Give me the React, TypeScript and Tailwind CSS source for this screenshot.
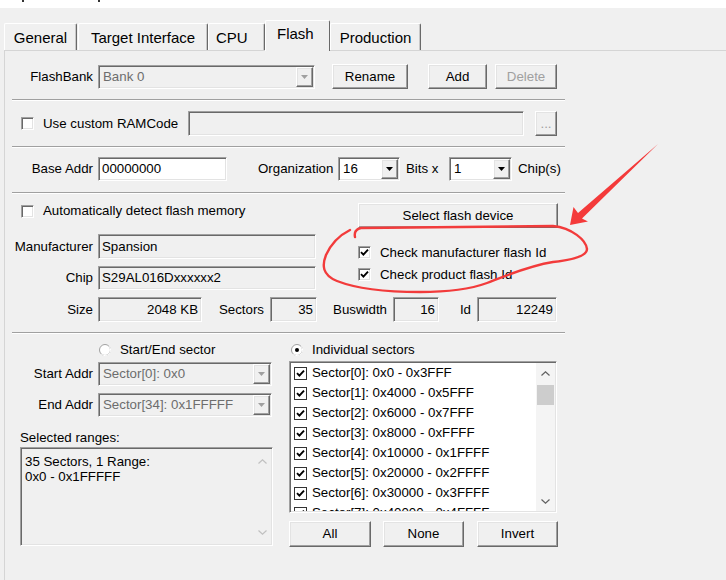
import React from "react";

const sunken =
  "border border-t-[#a0a0a0] border-l-[#a0a0a0] border-r-white border-b-white shadow-[inset_1px_1px_0_#696969,inset_-1px_-1px_0_#e3e3e3]";
const raised =
  "border border-t-white border-l-white border-r-[#696969] border-b-[#696969] shadow-[inset_-1px_-1px_0_#a0a0a0,inset_1px_1px_0_#e3e3e3]";

type Kids = { children?: React.ReactNode };

function Arrow({ disabled }: { disabled?: boolean }) {
  return (
    <div className={`${raised} w-[17px] h-full flex items-center justify-center bg-[#f0f0f0] shrink-0`}>
      <svg width="7" height="4" viewBox="0 0 7 4">
        <path d="M0 0h7L3.5 4z" fill={disabled ? "#a0a0a0" : "#000"} />
      </svg>
    </div>
  );
}

function Combo({ value, disabled, w }: { value: string; disabled?: boolean; w: string }) {
  return (
    <div
      className={`${sunken} ${w} h-[24px] p-[1px] flex items-stretch shrink-0 ${
        disabled ? "bg-[#f0f0f0] text-[#6d6d6d]" : "bg-white text-black"
      }`}
    >
      <div className="flex-1 flex items-center pl-[3px] overflow-hidden whitespace-nowrap">{value}</div>
      <Arrow disabled={disabled} />
    </div>
  );
}

function Field({ w, h = "h-[24px]", white, right, children }: Kids & { w: string; h?: string; white?: boolean; right?: boolean }) {
  return (
    <div
      className={`${sunken} ${w} ${h} shrink-0 flex items-center px-[3px] whitespace-nowrap ${
        white ? "bg-white" : "bg-[#f0f0f0]"
      } ${right ? "justify-end" : "justify-start"}`}
    >
      {children}
    </div>
  );
}

function Button({ w, h = "h-[25px]", disabled, children, className = "" }: Kids & { w: string; h?: string; disabled?: boolean; className?: string }) {
  return (
    <div
      className={`${raised} ${w} ${h} ${className} shrink-0 bg-[#f0f0f0] flex items-center justify-center ${
        disabled ? "text-[#a0a0a0]" : "text-black"
      }`}
    >
      {children}
    </div>
  );
}

function Check({ checked, flat }: { checked?: boolean; flat?: boolean }) {
  return (
    <div
      className={`${
        flat ? "border border-[#333]" : sunken
      } w-[13px] h-[13px] bg-white flex items-center justify-center shrink-0`}
    >
      {checked && (
        <svg width="9" height="9" viewBox="0 0 9 9">
          <path d="M1 4.2l2.4 2.4L8 1.6" stroke="#000" strokeWidth="1.9" fill="none" />
        </svg>
      )}
    </div>
  );
}

function Radio({ checked }: { checked?: boolean }) {
  return (
    <svg width="12" height="12" viewBox="0 0 12 12" className="shrink-0">
      <circle cx="6" cy="6" r="5.5" fill="#fff" stroke="#a0a0a0" />
      <path d="M10 2.2A5.5 5.5 0 0 1 2.2 10" stroke="#fff" fill="none" />
      {checked && <circle cx="6" cy="6" r="2" fill="#000" />}
    </svg>
  );
}

function Separator() {
  return <div className="ml-[7px] w-[553px] h-[2px] border-t border-t-[#a0a0a0] border-b border-b-white" />;
}

function Label({ w = "w-[88px]", children, className = "" }: Kids & { w?: string; className?: string }) {
  return <div className={`${w} ${className} shrink-0 text-right whitespace-nowrap`}>{children}</div>;
}

function Chevron({ up, color }: { up?: boolean; color: string }) {
  return (
    <svg width="9" height="5" viewBox="0 0 9 5">
      <path d={up ? "M0.5 4.5L4.5 0.8L8.5 4.5" : "M0.5 0.5L4.5 4.2L8.5 0.5"} stroke={color} strokeWidth="1.2" fill="none" />
    </svg>
  );
}

const sectors = [
  "Sector[0]: 0x0 - 0x3FFF",
  "Sector[1]: 0x4000 - 0x5FFF",
  "Sector[2]: 0x6000 - 0x7FFF",
  "Sector[3]: 0x8000 - 0xFFFF",
  "Sector[4]: 0x10000 - 0x1FFFF",
  "Sector[5]: 0x20000 - 0x2FFFF",
  "Sector[6]: 0x30000 - 0x3FFFF",
  "Sector[7]: 0x40000 - 0x4FFFF",
];

function Tab({ w, active, className = "justify-center", children }: Kids & { w: string; active?: boolean; className?: string }) {
  if (active) {
    return (
      <div
        className={`${w} ${className} h-[31px] -mb-px relative z-10 bg-[#f0f0f0] border-t border-l border-t-white border-l-white border-r border-r-[#696969] rounded-t-[2px] flex items-start pt-[4px] shrink-0`}
      >
        {children}
      </div>
    );
  }
  return (
    <div
      className={`${w} ${className} h-[27px] bg-[#f0f0f0] border-t border-l border-t-white border-l-white border-r border-r-[#696969] shadow-[inset_-1px_0_0_#c8c8c8] rounded-t-[2px] flex items-center pt-[1px] shrink-0`}
    >
      {children}
    </div>
  );
}

function Annotation() {
  return (
    <svg width="726" height="580" viewBox="0 0 726 580" className="absolute inset-0 pointer-events-none">
      <path
        d="M355 237C354 232 356 229 361 228L553 226C572 228 586 240 587 249C587 256 572 260 553 262C528 266 505 276 487 283C468 290 445 292 420 292C392 292 360 290 337 281C322 275 322 265 326 255C331 244 340 235 350 230"
        stroke="#f23b3b"
        strokeWidth="2.4"
        fill="none"
        strokeLinecap="round"
      />
      <polygon points="570,225 573.5,207 578,213 658,144 582,218.5 588,221.5" fill="#f43a3a" />
    </svg>
  );
}

export default function App() {
  return (
    <div className="w-[726px] h-[580px] bg-[#f0f0f0] relative overflow-hidden font-['Liberation_Sans',Arial,sans-serif] text-[13.3px] leading-[16px] text-black">
      <div className="h-[8px] bg-white flex items-start">
        <div className="ml-[22px] w-[2px] h-[2px] bg-[#333]" />
        <div className="ml-[74px] w-[2px] h-[2px] bg-[#333]" />
      </div>

      <div className="h-[42px] flex items-end pl-[4px] text-[15px] leading-[18px] relative z-10">
        <Tab w="w-[73px]">General</Tab>
        <Tab w="w-[130px] ml-[1px]">Target Interface</Tab>
        <Tab w="w-[57px]" className="justify-start pl-[7px]">CPU</Tab>
        <Tab w="w-[65px]" active className="justify-start pl-[11px]">Flash</Tab>
        <Tab w="w-[91px]">Production</Tab>
      </div>

      <div className="ml-[4px] h-[530px] border-t border-l border-t-[#d5d5d5] border-l-[#d5d5d5]">
        {/* FlashBank */}
        <div className="mt-[13px] h-[25px] flex items-center">
          <Label>FlashBank</Label>
          <div className="ml-[5px]">
            <Combo w="w-[217px]" value="Bank 0" disabled />
          </div>
          <Button w="w-[76px]" className="ml-[17px]">Rename</Button>
          <Button w="w-[59px]" className="ml-[20px]">Add</Button>
          <Button w="w-[62px]" className="ml-[8px]" disabled>Delete</Button>
        </div>

        <div className="mt-[10px]"><Separator /></div>

        {/* RAMCode */}
        <div className="mt-[10px] h-[25px] flex items-center">
          <div className="ml-[16px]"><Check /></div>
          <div className="ml-[9px] w-[145px] shrink-0 whitespace-nowrap">Use custom RAMCode</div>
          <Field w="w-[336px]" h="h-[25px]" />
          <Button w="w-[22px]" className="ml-[11px]" disabled>...</Button>
        </div>

        <div className="mt-[10px]"><Separator /></div>

        {/* Base Addr */}
        <div className="mt-[9px] h-[24px] flex items-center">
          <Label>Base Addr</Label>
          <div className="ml-[5px]">
            <Field w="w-[129px]" white>00000000</Field>
          </div>
          <div className="ml-[31px] w-[80px] shrink-0 whitespace-nowrap">Organization</div>
          <Combo w="w-[62px]" value="16" />
          <div className="w-[49px] pl-[6px] shrink-0 whitespace-nowrap">Bits x</div>
          <Combo w="w-[63px]" value="1" />
          <div className="ml-[6px] whitespace-nowrap">Chip(s)</div>
        </div>

        <div className="mt-[11px]"><Separator /></div>

        {/* Device section */}
        <div className="flex">
          <div className="w-[353px] shrink-0">
            <div className="mt-[10px] h-[14px] flex items-center">
              <div className="ml-[16px]"><Check /></div>
              <div className="ml-[9px] whitespace-nowrap">Automatically detect flash memory</div>
            </div>
            <div className="mt-[16px] h-[25px] flex items-center">
              <Label>Manufacturer</Label>
              <div className="ml-[5px]">
                <Field w="w-[218px]" h="h-[25px]">Spansion</Field>
              </div>
            </div>
            <div className="mt-[7px] h-[24px] flex items-center">
              <Label>Chip</Label>
              <div className="ml-[5px]">
                <Field w="w-[218px]">S29AL016Dxxxxxx2</Field>
              </div>
            </div>
          </div>
          <div>
            <Button w="w-[200px]" className="mt-[9px]">Select flash device</Button>
            <div className="mt-[18px] h-[13px] flex items-center">
              <Check checked />
              <div className="ml-[9px] whitespace-nowrap">Check manufacturer flash Id</div>
            </div>
            <div className="mt-[9px] h-[13px] flex items-center">
              <Check checked />
              <div className="ml-[9px] whitespace-nowrap">Check product flash Id</div>
            </div>
          </div>
        </div>

        {/* Size row */}
        <div className="mt-[7px] h-[25px] flex items-center">
          <Label>Size</Label>
          <div className="ml-[5px]">
            <Field w="w-[104px]" h="h-[25px]" right>2048 KB</Field>
          </div>
          <Label w="w-[68px]" className="pr-[6px]">Sectors</Label>
          <Field w="w-[47px]" h="h-[25px]" right>35</Field>
          <Label w="w-[76px]" className="pr-[6px]">Buswidth</Label>
          <Field w="w-[46px]" h="h-[25px]" right>16</Field>
          <Label w="w-[38px]" className="pr-[6px]">Id</Label>
          <Field w="w-[80px]" h="h-[25px]" right>12249</Field>
        </div>

        <div className="mt-[10px]"><Separator /></div>

        {/* Sector selection */}
        <div className="flex">
          <div className="w-[284px] shrink-0">
            <div className="mt-[8px] h-[16px] flex items-center">
              <div className="ml-[94px]"><Radio /></div>
              <div className="ml-[9px] whitespace-nowrap">Start/End sector</div>
            </div>
            <div className="mt-[4px] h-[24px] flex items-center">
              <Label>Start Addr</Label>
              <div className="ml-[5px]">
                <Combo w="w-[174px]" value="Sector[0]: 0x0" disabled />
              </div>
            </div>
            <div className="mt-[7px] h-[24px] flex items-center">
              <Label>End Addr</Label>
              <div className="ml-[5px]">
                <Combo w="w-[174px]" value="Sector[34]: 0x1FFFFF" disabled />
              </div>
            </div>
            <div className="mt-[13px] h-[16px] ml-[15px] flex items-center whitespace-nowrap">Selected ranges:</div>
            <div className={`${sunken} mt-[1px] ml-[15px] w-[253px] h-[99px] bg-[#f0f0f0] p-[1px] flex`}>
              <div className="flex-1 pl-[3px] pt-[5px] leading-[15px]">
                <div>35 Sectors, 1 Range:</div>
                <div>0x0 - 0x1FFFFF</div>
              </div>
              <div className="w-[17px] flex flex-col items-center justify-between pt-[10px] pb-[9px]">
                <Chevron up color="#c0c0c0" />
                <Chevron color="#c0c0c0" />
              </div>
            </div>
          </div>

          <div className="w-[269px] shrink-0">
            <div className="mt-[8px] h-[16px] flex items-center">
              <div className="ml-[2px]"><Radio checked /></div>
              <div className="ml-[9px] whitespace-nowrap">Individual sectors</div>
            </div>
            <div className={`${sunken} mt-[3px] w-[268px] h-[152px] bg-white p-[1px] flex`}>
              <div className="flex-1 overflow-hidden">
                {sectors.map((s) => (
                  <div key={s} className="h-[20px] flex items-center pl-[3px] whitespace-nowrap">
                    <Check checked flat />
                    <div className="ml-[5px]">{s}</div>
                  </div>
                ))}
              </div>
              <div className="w-[19px] bg-[#f4f4f4] flex flex-col">
                <div className="h-[20px] flex items-center justify-center">
                  <Chevron up color="#606060" />
                </div>
                <div className="mt-[2px] h-[20px] mx-[1px] bg-[#cdcdcd]" />
                <div className="flex-1" />
                <div className="h-[20px] flex items-center justify-center">
                  <Chevron color="#606060" />
                </div>
              </div>
            </div>
            <div className="mt-[8px] h-[26px] flex">
              <Button w="w-[82px]" h="h-[26px]">All</Button>
              <Button w="w-[81px]" h="h-[26px]" className="ml-[12px]">None</Button>
              <Button w="w-[81px]" h="h-[26px]" className="ml-[13px]">Invert</Button>
            </div>
          </div>
        </div>
      </div>

      <Annotation />
    </div>
  );
}
